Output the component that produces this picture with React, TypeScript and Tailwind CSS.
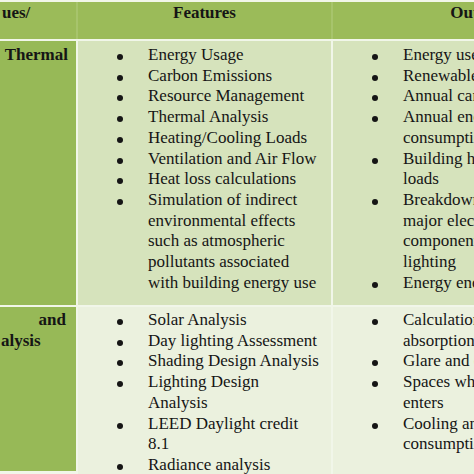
const serif = { fontFamily: '"Liberation Serif", "Times New Roman", serif' };

type Item = string[];

const thermalFeatures: Item[] = [
  ["Energy Usage"],
  ["Carbon Emissions"],
  ["Resource Management"],
  ["Thermal Analysis"],
  ["Heating/Cooling Loads"],
  ["Ventilation and Air Flow"],
  ["Heat loss calculations"],
  [
    "Simulation of indirect",
    "environmental effects",
    "such as atmospheric",
    "pollutants associated",
    "with building energy use",
  ],
];

const thermalOutputs: Item[] = [
  ["Energy use intensity"],
  ["Renewable energy"],
  ["Annual carbon emissions"],
  ["Annual energy", "consumption"],
  ["Building heating/cooling", "loads"],
  ["Breakdown of the", "major electrical", "components and", "lighting"],
  ["Energy end uses"],
];

const solarFeatures: Item[] = [
  ["Solar Analysis"],
  ["Day lighting Assessment"],
  ["Shading Design Analysis"],
  ["Lighting Design", "Analysis"],
  ["LEED Daylight credit", "8.1"],
  ["Radiance analysis"],
];

const solarOutputs: Item[] = [
  ["Calculation of solar", "absorption"],
  ["Glare and daylight"],
  ["Spaces where daylight", "enters"],
  ["Cooling and lighting", "consumption"],
];

function BulletList({ items }: { items: Item[] }) {
  return (
    <ul className="flex flex-col">
      {items.map((lines, i) => (
        <li key={i} className="flex pl-[39px]">
          <span className="w-[31px] shrink-0 pt-[9px]">
            <span className="block w-[6px] h-[6px] rounded-full bg-[#151515]" />
          </span>
          <div className="flex flex-col">
            {lines.map((l, j) => (
              <span key={j} className="whitespace-nowrap">
                {l}
              </span>
            ))}
          </div>
        </li>
      ))}
    </ul>
  );
}

export default function App() {
  return (
    <div
      className="w-[474px] h-[474px] overflow-hidden bg-[#f1f6e9] pt-[2px] text-[17px] leading-[20.7px] text-[#151515]"
      style={serif}
    >
      {/* header */}
      <div className="grid grid-cols-[76px_253px_294px] gap-x-[2px] bg-[#a7c46c] h-[37px]">
        <div className="bg-[#9bbb59] font-bold pt-[1px] pl-[2px] whitespace-nowrap overflow-hidden">ues/</div>
        <div className="bg-[#9bbb59] font-bold pt-[1px] text-center">Features</div>
        <div className="bg-[#9bbb59] font-bold pt-[1px] text-center">Outputs</div>
      </div>

      {/* body */}
      <div className="mt-[2px] grid grid-cols-[76px_253px_294px] gap-[2px]">
        <div className="bg-[#97b957] h-[264px] pt-[4px] pr-[8px] text-right font-bold">Thermal</div>
        <div className="bg-[#d6e3bc] pt-[4px]">
          <BulletList items={thermalFeatures} />
        </div>
        <div className="bg-[#d6e3bc] pt-[4px]">
          <BulletList items={thermalOutputs} />
        </div>

        <div className="bg-[#97b957] h-[164px] pt-[3px] font-bold flex flex-col">
          <span className="text-right pr-[10px]">and</span>
          <span className="pl-[1px]">alysis</span>
        </div>
        <div className="bg-[#ebf1de] pt-[3px] overflow-hidden">
          <BulletList items={solarFeatures} />
        </div>
        <div className="bg-[#ebf1de] pt-[3px] overflow-hidden">
          <BulletList items={solarOutputs} />
        </div>
      </div>
    </div>
  );
}
